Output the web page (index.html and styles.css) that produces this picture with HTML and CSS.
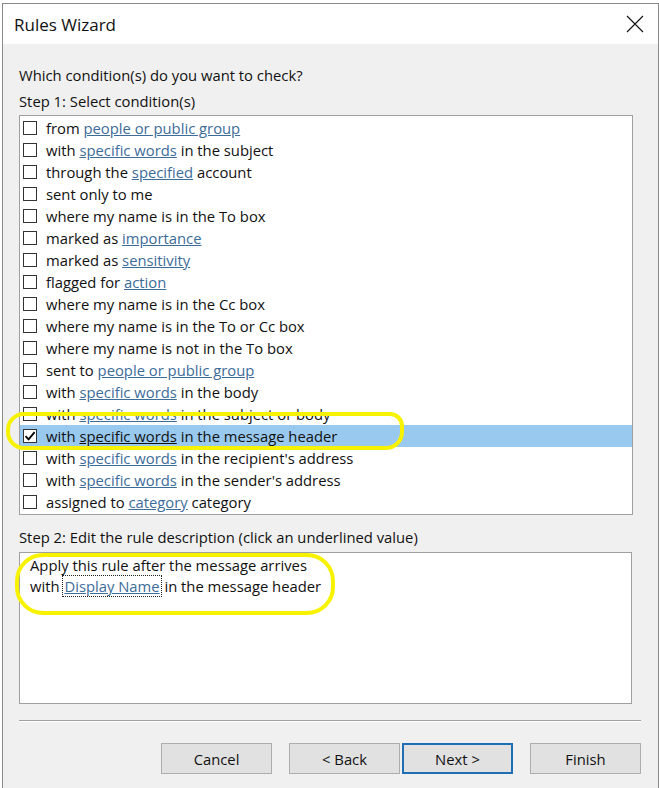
FILE: index.html
```html
<!DOCTYPE html>
<html>
<head>
<meta charset="utf-8">
<link rel="stylesheet" href="styles.css">
</head>
<body>
<div class="window">
  <div class="titlebar">
    <span class="title">Rules Wizard</span>
    <svg class="close" width="18" height="18" viewBox="0 0 18 18"><path d="M1 1 L17 17 M17 1 L1 17" stroke="#111" stroke-width="1.1" fill="none"/></svg>
  </div>
  <div class="content">
    <div class="heading">Which condition(s) do you want to check?</div>
    <div class="label step1">Step 1: Select condition(s)</div>
    <div class="listbox">
      <div class="item"><span class="cb"></span><span>from <a>people or public group</a></span></div>
      <div class="item"><span class="cb"></span><span>with <a>specific words</a> in the subject</span></div>
      <div class="item"><span class="cb"></span><span>through the <a>specified</a> account</span></div>
      <div class="item"><span class="cb"></span><span>sent only to me</span></div>
      <div class="item"><span class="cb"></span><span>where my name is in the To box</span></div>
      <div class="item"><span class="cb"></span><span>marked as <a>importance</a></span></div>
      <div class="item"><span class="cb"></span><span>marked as <a>sensitivity</a></span></div>
      <div class="item"><span class="cb"></span><span>flagged for <a>action</a></span></div>
      <div class="item"><span class="cb"></span><span>where my name is in the Cc box</span></div>
      <div class="item"><span class="cb"></span><span>where my name is in the To or Cc box</span></div>
      <div class="item"><span class="cb"></span><span>where my name is not in the To box</span></div>
      <div class="item"><span class="cb"></span><span>sent to <a>people or public group</a></span></div>
      <div class="item"><span class="cb"></span><span>with <a>specific words</a> in the body</span></div>
      <div class="item"><span class="cb"></span><span>with <a>specific words</a> in the subject or body</span></div>
      <div class="item selected"><span class="cb checked"><svg width="12" height="12" viewBox="0 0 12 12"><path d="M1.5 6.2 L4.6 9.3 L10.6 2.2" stroke="#000" stroke-width="1.8" fill="none"/></svg></span><span>with <a>specific words</a> in the message header</span></div>
      <div class="item"><span class="cb"></span><span>with <a>specific words</a> in the recipient's address</span></div>
      <div class="item"><span class="cb"></span><span>with <a>specific words</a> in the sender's address</span></div>
      <div class="item"><span class="cb"></span><span>assigned to <a>category</a> category</span></div>
    </div>
    <div class="label step2">Step 2: Edit the rule description (click an underlined value)</div>
    <div class="descbox">
      <div>Apply this rule after the message arrives</div>
      <div>with <a class="focused">Display Name</a> in the message header</div>
    </div>
    <div class="separator"></div>
    <div class="buttons">
      <button class="btn">Cancel</button>
      <button class="btn back">&lt; Back</button>
      <button class="btn next">Next &gt;</button>
      <button class="btn finish">Finish</button>
    </div>
  </div>
  <div class="mark mark1"></div>
  <div class="mark mark2"></div>
</div>
</body>
</html>
```

FILE: styles.css
```css
html, body {
  margin: 0;
  padding: 0;
  background: #ffffff;
}
body {
  font-family: "Open Sans", "Noto Sans", sans-serif;
  font-size: 14.8px;
  color: #111;
  overflow: hidden;
}
.window {
  position: relative;
  margin: 3px 0 0 2px;
  width: 655px;
  height: 790px;
  border: 1px solid #8a8a8a;
  border-bottom: none;
  background: #f0f0f0;
}
.titlebar {
  height: 40px;
  background: #ffffff;
  display: flex;
  align-items: center;
  justify-content: space-between;
  padding: 0 14px 0 11px;
}
.title {
  font-size: 17px;
  color: #111;
  margin-top: 1px;
}
.content {
  padding: 21px 0 0 16px;
  display: flex;
  flex-direction: column;
}
.heading, .label {
  line-height: 20px;
  height: 20px;
  white-space: nowrap;
}
.step1 {
  margin-top: 6px;
}
.listbox {
  margin-top: 4px;
  width: 612px;
  height: 397px;
  border: 1px solid #a0a0a0;
  background: #fff;
  padding-top: 1px;
  overflow: hidden;
}
.item {
  height: 22px;
  display: flex;
  align-items: center;
  white-space: nowrap;
}
.item.selected {
  background: #99c9ef;
}
.cb {
  width: 12px;
  height: 12px;
  border: 1px solid #333;
  background: #fff;
  margin: 0 9px 0 3px;
  flex: none;
  display: flex;
  align-items: center;
  justify-content: center;
}
a {
  color: #3d6c99;
  text-decoration: underline;
}
.selected a {
  color: #111;
}
.step2 {
  margin-top: 12px;
}
.descbox {
  margin-top: 5px;
  width: 601px;
  height: 148px;
  border: 1px solid #a0a0a0;
  background: #fff;
  padding: 2px 0 0 10px;
  line-height: 21px;
  white-space: nowrap;
}
.focused {
  outline: 1px dotted #222;
  outline-offset: 0;
  padding: 0 1px;
}
.separator {
  margin-top: 16px;
  width: 622px;
  height: 1px;
  background: #a0a0a0;
  border-bottom: 1px solid #fff;
}
.buttons {
  margin-top: 21px;
  display: flex;
  padding-left: 142px;
}
.btn {
  width: 111px;
  height: 31px;
  background: #e1e1e1;
  border: 1px solid #adadad;
  font-family: "Open Sans", "Noto Sans", sans-serif;
  font-size: 14.8px;
  color: #111;
  padding: 0;
}
.back {
  margin-left: 17px;
}
.next {
  margin-left: 2px;
  border: 2px solid #1f6db3;
}
.finish {
  margin-left: 17px;
}
.mark {
  position: absolute;
  border: 4px solid #f7f300;
  pointer-events: none;
}
.mark1 {
  left: 3px;
  top: 408px;
  width: 390px;
  height: 30px;
  border-radius: 18px 14px 18px 18px;
}
.mark2 {
  left: 12px;
  top: 549px;
  width: 312px;
  height: 54px;
  border-radius: 28px;
}
```
